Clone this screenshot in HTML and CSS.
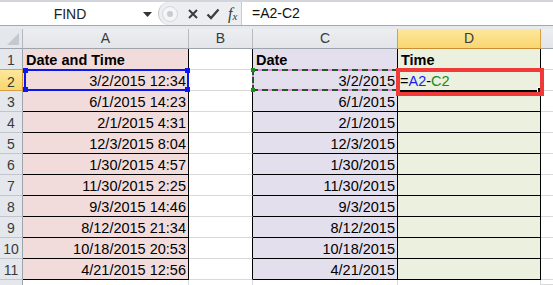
FILE: index.html
```html
<!DOCTYPE html>
<html>
<head>
<meta charset="utf-8">
<link rel="stylesheet" href="styles.css">
</head>
<body>
<div class="app">
  <div class="fbar">
    <div class="namebox">
      <span class="name">FIND</span>
      <svg class="dd" width="9" height="5" viewBox="0 0 9 5"><path d="M0 0h9L4.5 5z" fill="#333"/></svg>
    </div>
    <div class="btns">
      <span class="grip"><span class="dot"></span></span>
      <svg class="ico" width="12" height="12" viewBox="0 0 12 12"><path d="M2 2L10 10M10 2L2 10" stroke="#3c3c3c" stroke-width="2" fill="none"/></svg>
      <svg class="ico" width="14" height="12" viewBox="0 0 14 12"><path d="M1.5 6.5L5 10L12.5 1.5" stroke="#3c3c3c" stroke-width="2.3" fill="none"/></svg>
      <span class="fx">f<sub>x</sub></span>
    </div>
    <div class="finput">=A2-C2</div>
  </div>
  <div class="fgap"></div>
  <div class="sheet">
    <div class="corner"><span class="tri"></span></div>
    <div class="ch">A</div>
    <div class="ch">B</div>
    <div class="ch">C</div>
    <div class="ch act">D</div>
    <div class="ch last"></div>

    <div class="rh">1</div>
    <div class="cell a hd">Date and Time</div>
    <div class="cell b"></div>
    <div class="cell c hd">Date</div>
    <div class="cell d hd">Time</div>
    <div class="cell e"></div>

    <div class="rh act">2</div>
    <div class="cell a num ov">3/2/2015 12:34<span class="refblue"><i class="h tl"></i><i class="h tr"></i><i class="h bl"></i><i class="h br"></i></span></div>
    <div class="cell b"></div>
    <div class="cell c num ov">3/2/2015<span class="ants"></span><i class="gh gtl"></i><i class="gh gbl"></i></div>
    <div class="cell d edit ov"><span class="k">=</span><span class="blue">A2</span><span class="k">-</span><span class="green">C2</span><span class="actline"></span><span class="fill"></span><span class="redbox"></span></div>
    <div class="cell e"></div>

    <div class="rh">3</div>
    <div class="cell a num">6/1/2015 14:23</div>
    <div class="cell b"></div>
    <div class="cell c num">6/1/2015</div>
    <div class="cell d"></div>
    <div class="cell e"></div>

    <div class="rh">4</div>
    <div class="cell a num">2/1/2015 4:31</div>
    <div class="cell b"></div>
    <div class="cell c num">2/1/2015</div>
    <div class="cell d"></div>
    <div class="cell e"></div>

    <div class="rh">5</div>
    <div class="cell a num">12/3/2015 8:04</div>
    <div class="cell b"></div>
    <div class="cell c num">12/3/2015</div>
    <div class="cell d"></div>
    <div class="cell e"></div>

    <div class="rh">6</div>
    <div class="cell a num">1/30/2015 4:57</div>
    <div class="cell b"></div>
    <div class="cell c num">1/30/2015</div>
    <div class="cell d"></div>
    <div class="cell e"></div>

    <div class="rh">7</div>
    <div class="cell a num">11/30/2015 2:25</div>
    <div class="cell b"></div>
    <div class="cell c num">11/30/2015</div>
    <div class="cell d"></div>
    <div class="cell e"></div>

    <div class="rh">8</div>
    <div class="cell a num">9/3/2015 14:46</div>
    <div class="cell b"></div>
    <div class="cell c num">9/3/2015</div>
    <div class="cell d"></div>
    <div class="cell e"></div>

    <div class="rh">9</div>
    <div class="cell a num">8/12/2015 21:34</div>
    <div class="cell b"></div>
    <div class="cell c num">8/12/2015</div>
    <div class="cell d"></div>
    <div class="cell e"></div>

    <div class="rh">10</div>
    <div class="cell a num">10/18/2015 20:53</div>
    <div class="cell b"></div>
    <div class="cell c num">10/18/2015</div>
    <div class="cell d"></div>
    <div class="cell e"></div>

    <div class="rh">11</div>
    <div class="cell a num">4/21/2015 12:56</div>
    <div class="cell b"></div>
    <div class="cell c num">4/21/2015</div>
    <div class="cell d"></div>
    <div class="cell e"></div>

    <div class="rh stub"></div>
    <div class="cell w"></div>
    <div class="cell w"></div>
    <div class="cell w"></div>
    <div class="cell w"></div>
    <div class="cell e"></div>
  </div>
</div>
</body>
</html>
```

FILE: styles.css
```css
html, body {
  margin: 0;
  padding: 0;
}
body {
  width: 553px;
  height: 285px;
  overflow: hidden;
  background: #fff;
  font-family: "Liberation Sans", Arial, sans-serif;
  color: #000;
}
.app {
  display: flex;
  flex-direction: column;
  width: 553px;
  height: 285px;
  overflow: hidden;
}

/* formula bar */
.fbar {
  display: flex;
  height: 23px;
  border-top: 2px solid #d2d6db;
  border-bottom: 1px solid #a3a9b0;
  background: #fff;
}
.fgap {
  height: 3px;
  background: #e6e9ed;
}
.namebox {
  width: 158px;
  display: flex;
  align-items: center;
  background: #fff;
}
.name {
  width: 140px;
  text-align: center;
  font-size: 14px;
  color: #222;
}
.dd {
  margin-left: 3px;
  margin-top: 1px;
}
.btns {
  width: 83px;
  display: flex;
  align-items: center;
  background: #eceef1;
  border-left: 1px solid #c3c7cd;
  border-radius: 12px 0 0 12px;
  box-sizing: border-box;
}
.grip {
  width: 14px;
  height: 14px;
  border-radius: 50%;
  margin-left: 3px;
  background: #f4f5f6;
  border: 1px solid #d4d7db;
  display: flex;
  align-items: center;
  justify-content: center;
}
.dot {
  width: 6px;
  height: 6px;
  border-radius: 50%;
  background: #c8cbcf;
}
.ico {
  margin-left: 9px;
}
.ico + .ico {
  margin-left: 7px;
}
.fx {
  margin-left: 8px;
  font-family: "Liberation Serif", "Times New Roman", serif;
  font-style: italic;
  font-size: 16px;
  color: #3a3a3a;
  line-height: 1;
}
.fx sub {
  font-size: 11px;
  vertical-align: baseline;
  position: relative;
  top: 1px;
}
.finput {
  flex: 1;
  border-left: 1px solid #c7cbd1;
  font-size: 14px;
  line-height: 23px;
  padding-left: 10px;
  color: #111;
}

/* sheet */
.sheet {
  display: grid;
  grid-template-columns: 23px 166px 64px 145px 143px 12px;
  grid-template-rows: 20px repeat(11, 21px) 5px;
}
.corner {
  background: #e4e7eb;
  border-right: 1px solid #b4b9c0;
  border-bottom: 1px solid #9ea4ab;
  box-sizing: border-box;
  position: relative;
}
.tri {
  position: absolute;
  right: 3px;
  bottom: 3px;
  width: 12px;
  height: 12px;
  background: #c5c9ce;
  clip-path: polygon(100% 0, 100% 100%, 0 100%);
}
.ch {
  background: linear-gradient(#eceef1, #e2e5e9);
  border-right: 1px solid #b6bbc2;
  border-bottom: 1px solid #9ea4ab;
  box-sizing: border-box;
  font-size: 14px;
  color: #3a3a3a;
  text-align: center;
  line-height: 19px;
}
.ch.act {
  background: linear-gradient(#fde89a, #f9d66f);
  border-right: 1px solid #d9a144;
  border-left: 1px solid #d9a144;
  border-bottom: 1px solid #c98f31;
  margin-left: -1px;
}
.ch.last {
  border-right: none;
}
.rh {
  background: #e4e7eb;
  border-right: 1px solid #9ea4ab;
  border-bottom: 1px solid #c2c6cc;
  box-sizing: border-box;
  font-size: 14px;
  color: #3a3a3a;
  text-align: center;
  padding-top: 2px;
  line-height: 18px;
}
.rh.act {
  background: linear-gradient(#fde89a, #f9d66f);
  border-right: 1px solid #c98f31;
  border-bottom: 1px solid #d9a144;
  border-top: 1px solid #d9a144;
  margin-top: -1px;
  padding-top: 3px;
}
.rh.stub {
  border-bottom: none;
}
.cell {
  box-sizing: border-box;
  border-right: 1px solid #d9d9d9;
  border-bottom: 1px solid #d9d9d9;
  font-size: 14.5px;
  line-height: 19px;
  padding: 2px 3px 0 3px;
  white-space: nowrap;
}
.cell.ov {
  position: relative;
  z-index: 1;
}
.cell.edit {
  z-index: 2;
}
.cell.a {
  background: #f2dcdb;
  border-right-color: #000;
  border-bottom-color: #000;
}
.cell.b {
  background: #fff;
  border-right-color: #000;
}
.cell.c {
  background: #e4dfec;
  border-right-color: #000;
  border-bottom-color: #000;
}
.cell.d {
  background: #ebf1de;
  border-right-color: #000;
  border-bottom-color: #000;
}
.cell.e {
  background: #fff;
  border-right: none;
}
.cell.w {
  background: #fff;
  border-bottom: none;
}
.hd {
  font-weight: bold;
}
.num {
  text-align: right;
  padding-right: 2px;
}
.edit {
  padding-left: 2px;
}
.k { color: #000; }
.blue { color: #1c1cf0; }
.green { color: #138a26; }

/* overlays */
.refblue {
  position: absolute;
  top: -1px;
  left: 1px;
  right: -1px;
  bottom: -1px;
  border: 2px solid #0b17f2;
}
.h {
  position: absolute;
  width: 5px;
  height: 5px;
  background: #0b17f2;
}
.h.tl { left: -3px; top: -3px; }
.h.tr { right: -3px; top: -3px; }
.h.bl { left: -3px; bottom: -3px; }
.h.br { right: -3px; bottom: -3px; }

.ants {
  position: absolute;
  top: -1px;
  left: -1px;
  right: -1px;
  bottom: -1px;
  border: 2px solid #ec82ec;
}
.ants::before {
  content: "";
  position: absolute;
  top: -2px;
  left: -2px;
  right: -2px;
  bottom: -2px;
  border: 2px dashed #1f5a1f;
}
.gh {
  position: absolute;
  width: 4px;
  height: 4px;
  background: #1c8a1c;
  left: -2px;
}
.gtl { top: -2px; }
.gbl { bottom: -2px; }

.actline {
  position: absolute;
  left: 1px;
  right: -1px;
  bottom: -2px;
  height: 2px;
  background: #000;
}
.fill {
  position: absolute;
  right: -3px;
  bottom: -3px;
  width: 4px;
  height: 4px;
  background: #000;
  border: 1px solid #fff;
}
.redbox {
  position: absolute;
  top: -2px;
  left: -2px;
  right: -4px;
  bottom: -6px;
  border: 4px solid #f03a3a;
}
```
